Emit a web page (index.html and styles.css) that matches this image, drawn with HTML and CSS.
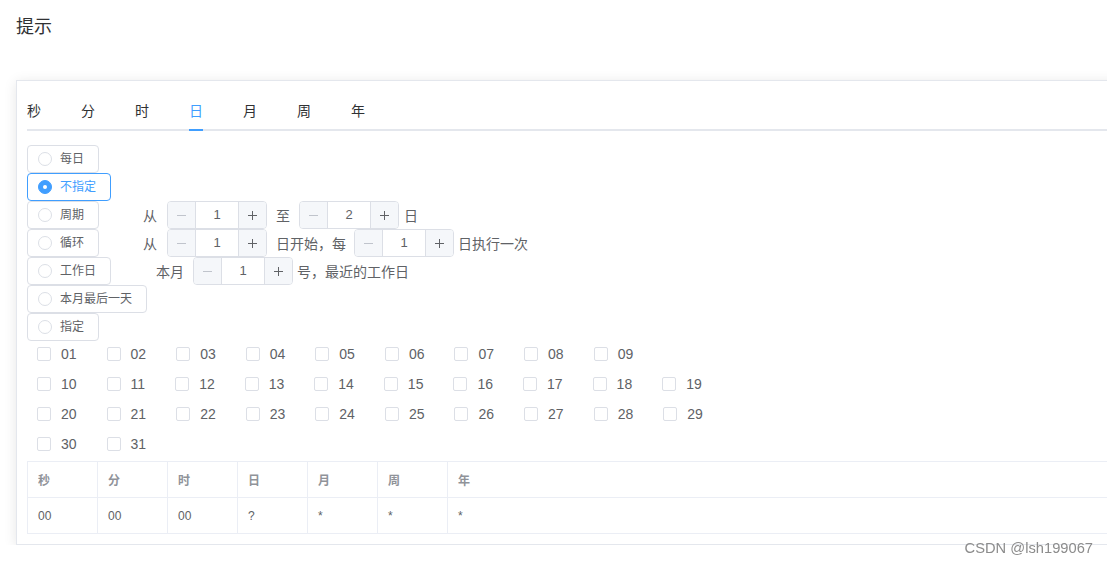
FILE: index.html
```html
<!DOCTYPE html>
<html lang="zh">
<head>
<meta charset="utf-8">
<title>提示</title>
<link rel="stylesheet" href="styles.css">
</head>
<body>
<div class="title">提示</div>
<div class="card">
  <div class="tabs">
    <div class="tab">秒</div>
    <div class="tab">分</div>
    <div class="tab">时</div>
    <div class="tab active">日</div>
    <div class="tab">月</div>
    <div class="tab">周</div>
    <div class="tab last">年</div>
  </div>
  <div class="pane">
    <div class="row">
      <label class="radio"><span class="radio-dot"></span><span class="radio-label">每日</span></label>
    </div>
    <div class="row">
      <label class="radio checked"><span class="radio-dot"></span><span class="radio-label">不指定</span></label>
    </div>
    <div class="row">
      <label class="radio"><span class="radio-dot"></span><span class="radio-label">周期</span></label>
      <span class="txt ml44">从</span>
      <div class="num ml10"><span class="num-btn dec"><svg width="9" height="9" viewBox="0 0 9 9"><path d="M0 4.5h9" stroke="currentColor" stroke-width="1"/></svg></span><span class="num-val">1</span><span class="num-btn inc"><svg width="9" height="9" viewBox="0 0 9 9"><path d="M0 4.5h9M4.5 0v9" stroke="currentColor" stroke-width="1"/></svg></span></div>
      <span class="txt ml9">至</span>
      <div class="num ml9"><span class="num-btn dec"><svg width="9" height="9" viewBox="0 0 9 9"><path d="M0 4.5h9" stroke="currentColor" stroke-width="1"/></svg></span><span class="num-val">2</span><span class="num-btn inc"><svg width="9" height="9" viewBox="0 0 9 9"><path d="M0 4.5h9M4.5 0v9" stroke="currentColor" stroke-width="1"/></svg></span></div>
      <span class="txt ml5">日</span>
    </div>
    <div class="row">
      <label class="radio"><span class="radio-dot"></span><span class="radio-label">循环</span></label>
      <span class="txt ml44">从</span>
      <div class="num ml10"><span class="num-btn dec"><svg width="9" height="9" viewBox="0 0 9 9"><path d="M0 4.5h9" stroke="currentColor" stroke-width="1"/></svg></span><span class="num-val">1</span><span class="num-btn inc"><svg width="9" height="9" viewBox="0 0 9 9"><path d="M0 4.5h9M4.5 0v9" stroke="currentColor" stroke-width="1"/></svg></span></div>
      <span class="txt ml9">日开始，每</span>
      <div class="num ml8"><span class="num-btn dec"><svg width="9" height="9" viewBox="0 0 9 9"><path d="M0 4.5h9" stroke="currentColor" stroke-width="1"/></svg></span><span class="num-val">1</span><span class="num-btn inc"><svg width="9" height="9" viewBox="0 0 9 9"><path d="M0 4.5h9M4.5 0v9" stroke="currentColor" stroke-width="1"/></svg></span></div>
      <span class="txt ml4">日执行一次</span>
    </div>
    <div class="row">
      <label class="radio"><span class="radio-dot"></span><span class="radio-label">工作日</span></label>
      <span class="txt ml45">本月</span>
      <div class="num ml9"><span class="num-btn dec"><svg width="9" height="9" viewBox="0 0 9 9"><path d="M0 4.5h9" stroke="currentColor" stroke-width="1"/></svg></span><span class="num-val">1</span><span class="num-btn inc"><svg width="9" height="9" viewBox="0 0 9 9"><path d="M0 4.5h9M4.5 0v9" stroke="currentColor" stroke-width="1"/></svg></span></div>
      <span class="txt ml4">号，最近的工作日</span>
    </div>
    <div class="row">
      <label class="radio"><span class="radio-dot"></span><span class="radio-label">本月最后一天</span></label>
    </div>
    <div class="row">
      <label class="radio"><span class="radio-dot"></span><span class="radio-label">指定</span></label>
    </div>
    <div class="days">
      <div class="day-row">
        <label class="check"><span class="check-box"></span><span class="check-label">01</span></label>
        <label class="check"><span class="check-box"></span><span class="check-label">02</span></label>
        <label class="check"><span class="check-box"></span><span class="check-label">03</span></label>
        <label class="check"><span class="check-box"></span><span class="check-label">04</span></label>
        <label class="check"><span class="check-box"></span><span class="check-label">05</span></label>
        <label class="check"><span class="check-box"></span><span class="check-label">06</span></label>
        <label class="check"><span class="check-box"></span><span class="check-label">07</span></label>
        <label class="check"><span class="check-box"></span><span class="check-label">08</span></label>
        <label class="check"><span class="check-box"></span><span class="check-label">09</span></label>
      </div>
      <div class="day-row">
        <label class="check"><span class="check-box"></span><span class="check-label">10</span></label>
        <label class="check"><span class="check-box"></span><span class="check-label">11</span></label>
        <label class="check"><span class="check-box"></span><span class="check-label">12</span></label>
        <label class="check"><span class="check-box"></span><span class="check-label">13</span></label>
        <label class="check"><span class="check-box"></span><span class="check-label">14</span></label>
        <label class="check"><span class="check-box"></span><span class="check-label">15</span></label>
        <label class="check"><span class="check-box"></span><span class="check-label">16</span></label>
        <label class="check"><span class="check-box"></span><span class="check-label">17</span></label>
        <label class="check"><span class="check-box"></span><span class="check-label">18</span></label>
        <label class="check"><span class="check-box"></span><span class="check-label">19</span></label>
      </div>
      <div class="day-row">
        <label class="check"><span class="check-box"></span><span class="check-label">20</span></label>
        <label class="check"><span class="check-box"></span><span class="check-label">21</span></label>
        <label class="check"><span class="check-box"></span><span class="check-label">22</span></label>
        <label class="check"><span class="check-box"></span><span class="check-label">23</span></label>
        <label class="check"><span class="check-box"></span><span class="check-label">24</span></label>
        <label class="check"><span class="check-box"></span><span class="check-label">25</span></label>
        <label class="check"><span class="check-box"></span><span class="check-label">26</span></label>
        <label class="check"><span class="check-box"></span><span class="check-label">27</span></label>
        <label class="check"><span class="check-box"></span><span class="check-label">28</span></label>
        <label class="check"><span class="check-box"></span><span class="check-label">29</span></label>
      </div>
      <div class="day-row">
        <label class="check"><span class="check-box"></span><span class="check-label">30</span></label>
        <label class="check"><span class="check-box"></span><span class="check-label">31</span></label>
      </div>
    </div>
    <div class="table">
      <div class="th">秒</div><div class="th">分</div><div class="th">时</div><div class="th">日</div><div class="th">月</div><div class="th">周</div><div class="th">年</div>
      <div class="td">00</div><div class="td">00</div><div class="td">00</div><div class="td">?</div><div class="td">*</div><div class="td">*</div><div class="td">*</div>
    </div>
  </div>
</div>
<div class="watermark">CSDN @lsh199067</div>
</body>
</html>
```

FILE: styles.css
```css
html {
  overflow: hidden;
}
body {
  margin: 0;
  background: #fff;
  font-family: "Liberation Sans", "Noto Sans CJK SC", sans-serif;
  color: #606266;
}
.title {
  padding: 15px 16px 0;
  font-size: 18px;
  line-height: 24px;
  color: #303133;
}
.card {
  margin: 41px 0 0 16px;
  width: 1130px;
  box-sizing: border-box;
  border: 1px solid #e4e7ed;
  padding: 10px;
  background: #fff;
  box-shadow: 0 2px 12px 0 rgba(0, 0, 0, 0.1);
}
.tabs {
  display: flex;
  height: 40px;
  box-shadow: inset 0 -2px 0 #e4e7ed;
  margin-bottom: 14px;
}
.tab {
  position: relative;
  padding: 0 20px;
  height: 40px;
  line-height: 40px;
  font-size: 14px;
  color: #303133;
}
.tab:first-child {
  padding-left: 0;
}
.tab.last {
  padding-right: 0;
}
.tab.active {
  color: #409eff;
}
.tab.active::after {
  content: "";
  position: absolute;
  left: 20px;
  right: 20px;
  bottom: 0;
  height: 2px;
  background: #409eff;
}
.row {
  display: flex;
  align-items: center;
  height: 28px;
  font-size: 14px;
}
.radio {
  display: inline-flex;
  align-items: center;
  height: 28px;
  box-sizing: border-box;
  border: 1px solid #dcdfe6;
  border-radius: 4px;
  padding: 0 14px 0 10px;
  font-size: 12px;
  color: #606266;
}
.radio-dot {
  width: 14px;
  height: 14px;
  box-sizing: border-box;
  border: 1px solid #dcdfe6;
  border-radius: 50%;
  background: #fff;
}
.radio-label {
  padding-left: 8px;
  line-height: 14px;
}
.radio.checked {
  border-color: #409eff;
  color: #409eff;
}
.radio.checked .radio-dot {
  background: #409eff;
  border-color: #409eff;
  display: flex;
  align-items: center;
  justify-content: center;
}
.radio.checked .radio-dot::after {
  content: "";
  width: 4px;
  height: 4px;
  border-radius: 50%;
  background: #fff;
}
.txt {
  color: #606266;
  font-size: 14px;
}
.ml4 { margin-left: 4px; }
.ml5 { margin-left: 5px; }
.ml8 { margin-left: 8px; }
.ml9 { margin-left: 9px; }
.ml10 { margin-left: 10px; }
.ml44 { margin-left: 44px; }
.ml45 { margin-left: 45px; }
.num {
  display: flex;
  width: 100px;
  height: 28px;
  box-sizing: border-box;
  border: 1px solid #dcdfe6;
  border-radius: 4px;
  overflow: hidden;
}
.num-btn {
  width: 27px;
  background: #f5f7fa;
  display: flex;
  align-items: center;
  justify-content: center;
}
.num-btn.dec {
  border-right: 1px solid #dcdfe6;
  color: #c0c4cc;
}
.num-btn.inc {
  border-left: 1px solid #dcdfe6;
  color: #606266;
}
.num-val {
  flex: 1;
  text-align: center;
  line-height: 26px;
  font-size: 13px;
  color: #606266;
}
.days {
  padding-left: 10px;
}
.day-row {
  display: flex;
  align-items: center;
  height: 26px;
  margin-bottom: 4px;
}
.check {
  display: flex;
  align-items: center;
  margin-right: 30px;
  font-size: 14px;
  color: #606266;
}
.check-box {
  width: 14px;
  height: 14px;
  box-sizing: border-box;
  border: 1px solid #dcdfe6;
  border-radius: 2px;
  background: #fff;
}
.check-label {
  padding-left: 10px;
}
.table {
  display: grid;
  grid-template-columns: repeat(6, 70px) 1fr;
  border-top: 1px solid #ebeef5;
  border-left: 1px solid #ebeef5;
  font-size: 12px;
}
.th, .td {
  height: 36px;
  box-sizing: border-box;
  border-right: 1px solid #ebeef5;
  border-bottom: 1px solid #ebeef5;
  padding: 0 10px;
  display: flex;
  align-items: center;
}
.th {
  color: #909399;
  font-weight: bold;
}
.td {
  color: #606266;
}
.watermark {
  position: fixed;
  right: 14px;
  top: 541px;
  font-size: 14.7px;
  line-height: 15px;
  color: #8c8c8c;
}
```
